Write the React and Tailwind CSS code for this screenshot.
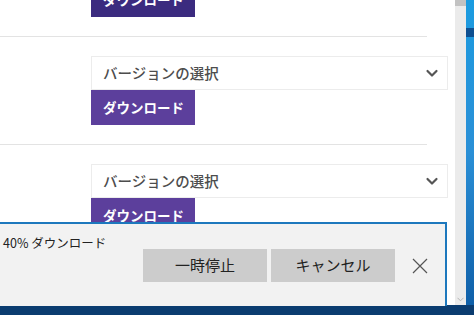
import React from 'react';

const font = { fontFamily: '"Noto Sans CJK JP", "Noto Sans", sans-serif' };

function Chevron() {
  return (
    <svg width="14" height="14" viewBox="0 0 14 14" fill="none" className="text-[#555]">
      <path d="M2.5 5 L7 9.5 L11.5 5" stroke="currentColor" strokeWidth="2.2" strokeLinecap="round" strokeLinejoin="round" />
    </svg>
  );
}

function Section({ last }) {
  return (
    <div className="flex flex-col">
      <div className="ml-[91px] mr-[7px] h-[34px] border border-[#ececec] bg-white flex items-center justify-between pl-[11px] pr-[8px]">
        <span className="text-[14.5px] font-medium text-[#4d4d4d] leading-none">バージョンの選択</span>
        <Chevron />
      </div>
      <button className="ml-[91px] w-[104px] h-[35px] bg-[#5c3f9c] text-white text-[13.5px] font-bold text-left pl-[12px] leading-none">
        ダウンロード
      </button>
      {!last && <div className="mt-[19px] mb-[19px] mr-[28px] h-px bg-[#e3e3e3]" />}
    </div>
  );
}

export default function App() {
  return (
    <div className="relative w-[474px] h-[315px] overflow-hidden bg-[#0b3c70]" style={font}>
      <div className="flex h-[305px]">
        <div className="w-[455px] bg-white overflow-hidden">
          <div className="flex flex-col mt-[-18px]">
            <button className="ml-[91px] w-[104px] h-[35px] bg-[#3b2b7f] text-white text-[13.5px] font-bold text-left pl-[12px] leading-none">
              ダウンロード
            </button>
            <div className="mt-[19px] mb-[19px] mr-[28px] h-px bg-[#e3e3e3]" />
            <Section />
            <Section last />
          </div>
        </div>
        <div className="w-[11px] bg-[#ebebeb] flex flex-col justify-between">
          <div className="h-[6px] bg-[#c2c2c2]" />
          <div className="h-[12px] flex items-center justify-center">
            <svg width="7" height="5" viewBox="0 0 7 5" fill="none">
              <path d="M0.5 0.8 L3.5 3.8 L6.5 0.8" stroke="#b5b5b5" strokeWidth="1" />
            </svg>
          </div>
        </div>
        <div className="flex-1 flex flex-col bg-gradient-to-b from-[#1a9be0] via-[#2a8fd6] to-[#0f5fa8]">
          <div className="mt-[28px] h-[9px] bg-[#0d4f91]" />
        </div>
      </div>

      <div className="absolute left-0 top-[222px] w-[447px] h-[84px] bg-[#f2f2f2] border-t-2 border-r-2 border-[#1d78bd] flex">
        <div className="pl-[3px] pt-[13px] text-[12.5px] text-[#222] leading-none w-[143px]">40% ダウンロード</div>
        <div className="flex gap-[4px] mt-[25px] h-[33px]">
          <button className="w-[124px] h-[33px] bg-[#cccccc] text-[15px] text-[#222]">一時停止</button>
          <button className="w-[124px] h-[33px] bg-[#cccccc] text-[15px] text-[#222]">キャンセル</button>
        </div>
        <div className="ml-[17px] mt-[34px]">
          <svg width="16" height="16" viewBox="0 0 16 16" fill="none">
            <path d="M1 1 L15 15 M15 1 L1 15" stroke="#555" strokeWidth="1.2" />
          </svg>
        </div>
      </div>
    </div>
  );
}
